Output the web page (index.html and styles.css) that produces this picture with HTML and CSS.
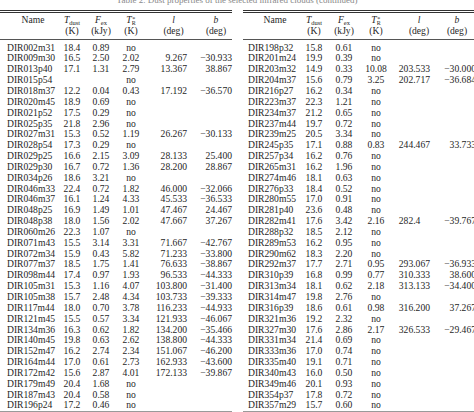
FILE: index.html
```html
<!DOCTYPE html>
<html>
<head>
<meta charset="utf-8">
<link rel="stylesheet" href="styles.css">
</head>
<body>
<div class="caption">Table 2. Dust properties of the selected infrared clouds (continued)</div>
<div class="tables">
<table class="t left">
<colgroup><col class="w-name"><col class="w-t"><col class="w-f"><col class="w-r"><col class="w-l"><col class="w-b"></colgroup>
<thead>
<tr><th class="c-name">Name</th><th class="c-t"><i>T</i><sub>dust</sub></th><th class="c-f"><i>F</i><sub>ex</sub></th><th class="c-r"><i>T</i><span class="ss"><span>*</span><span>R</span></span></th><th class="c-l"><i>l</i></th><th class="c-b"><i>b</i></th></tr>
<tr><th class="c-name"></th><th class="c-t">(K)</th><th class="c-f">(kJy)</th><th class="c-r">(K)</th><th class="c-l">(deg)</th><th class="c-b">(deg)</th></tr>
</thead>
<tbody>
<tr><td class="c-name">DIR002m31</td><td class="c-t">18.4</td><td class="c-f">0.89</td><td class="c-r">no</td><td class="c-l"></td><td class="c-b"></td></tr>
<tr><td class="c-name">DIR009m30</td><td class="c-t">16.5</td><td class="c-f">2.50</td><td class="c-r">2.02</td><td class="c-l">9.267</td><td class="c-b">−30.933</td></tr>
<tr><td class="c-name">DIR013p40</td><td class="c-t">17.1</td><td class="c-f">1.31</td><td class="c-r">2.79</td><td class="c-l">13.367</td><td class="c-b">38.867</td></tr>
<tr><td class="c-name">DIR015p54</td><td class="c-t"></td><td class="c-f"></td><td class="c-r">no</td><td class="c-l"></td><td class="c-b"></td></tr>
<tr><td class="c-name">DIR018m37</td><td class="c-t">12.2</td><td class="c-f">0.04</td><td class="c-r">0.43</td><td class="c-l">17.192</td><td class="c-b">−36.570</td></tr>
<tr><td class="c-name">DIR020m45</td><td class="c-t">18.9</td><td class="c-f">0.69</td><td class="c-r">no</td><td class="c-l"></td><td class="c-b"></td></tr>
<tr><td class="c-name">DIR021p52</td><td class="c-t">17.5</td><td class="c-f">0.29</td><td class="c-r">no</td><td class="c-l"></td><td class="c-b"></td></tr>
<tr><td class="c-name">DIR025p35</td><td class="c-t">21.8</td><td class="c-f">2.96</td><td class="c-r">no</td><td class="c-l"></td><td class="c-b"></td></tr>
<tr><td class="c-name">DIR027m31</td><td class="c-t">15.3</td><td class="c-f">0.52</td><td class="c-r">1.19</td><td class="c-l">26.267</td><td class="c-b">−30.133</td></tr>
<tr><td class="c-name">DIR028p54</td><td class="c-t">17.3</td><td class="c-f">0.29</td><td class="c-r">no</td><td class="c-l"></td><td class="c-b"></td></tr>
<tr><td class="c-name">DIR029p25</td><td class="c-t">16.6</td><td class="c-f">2.15</td><td class="c-r">3.09</td><td class="c-l">28.133</td><td class="c-b">25.400</td></tr>
<tr><td class="c-name">DIR029p30</td><td class="c-t">16.7</td><td class="c-f">0.72</td><td class="c-r">1.36</td><td class="c-l">28.200</td><td class="c-b">28.867</td></tr>
<tr><td class="c-name">DIR034p26</td><td class="c-t">18.6</td><td class="c-f">3.21</td><td class="c-r">no</td><td class="c-l"></td><td class="c-b"></td></tr>
<tr><td class="c-name">DIR046m33</td><td class="c-t">22.4</td><td class="c-f">0.72</td><td class="c-r">1.82</td><td class="c-l">46.000</td><td class="c-b">−32.066</td></tr>
<tr><td class="c-name">DIR046m37</td><td class="c-t">16.1</td><td class="c-f">1.24</td><td class="c-r">4.33</td><td class="c-l">45.533</td><td class="c-b">−36.533</td></tr>
<tr><td class="c-name">DIR048p25</td><td class="c-t">16.9</td><td class="c-f">1.49</td><td class="c-r">1.01</td><td class="c-l">47.467</td><td class="c-b">24.467</td></tr>
<tr><td class="c-name">DIR048p38</td><td class="c-t">18.0</td><td class="c-f">1.56</td><td class="c-r">2.02</td><td class="c-l">47.667</td><td class="c-b">37.267</td></tr>
<tr><td class="c-name">DIR060m26</td><td class="c-t">22.3</td><td class="c-f">1.07</td><td class="c-r">no</td><td class="c-l"></td><td class="c-b"></td></tr>
<tr><td class="c-name">DIR071m43</td><td class="c-t">15.5</td><td class="c-f">3.14</td><td class="c-r">3.31</td><td class="c-l">71.667</td><td class="c-b">−42.767</td></tr>
<tr><td class="c-name">DIR072m34</td><td class="c-t">15.9</td><td class="c-f">0.43</td><td class="c-r">5.82</td><td class="c-l">71.233</td><td class="c-b">−33.800</td></tr>
<tr><td class="c-name">DIR077m37</td><td class="c-t">18.5</td><td class="c-f">1.75</td><td class="c-r">1.41</td><td class="c-l">76.633</td><td class="c-b">−38.867</td></tr>
<tr><td class="c-name">DIR098m44</td><td class="c-t">17.4</td><td class="c-f">0.97</td><td class="c-r">1.93</td><td class="c-l">96.533</td><td class="c-b">−44.333</td></tr>
<tr><td class="c-name">DIR105m31</td><td class="c-t">15.3</td><td class="c-f">1.16</td><td class="c-r">4.07</td><td class="c-l">103.800</td><td class="c-b">−31.400</td></tr>
<tr><td class="c-name">DIR105m38</td><td class="c-t">15.7</td><td class="c-f">2.48</td><td class="c-r">4.34</td><td class="c-l">103.733</td><td class="c-b">−39.333</td></tr>
<tr><td class="c-name">DIR117m44</td><td class="c-t">18.0</td><td class="c-f">0.70</td><td class="c-r">3.78</td><td class="c-l">116.233</td><td class="c-b">−44.933</td></tr>
<tr><td class="c-name">DIR121m45</td><td class="c-t">15.5</td><td class="c-f">0.57</td><td class="c-r">3.34</td><td class="c-l">121.933</td><td class="c-b">−46.067</td></tr>
<tr><td class="c-name">DIR134m36</td><td class="c-t">16.3</td><td class="c-f">0.62</td><td class="c-r">1.82</td><td class="c-l">134.200</td><td class="c-b">−35.466</td></tr>
<tr><td class="c-name">DIR140m45</td><td class="c-t">19.8</td><td class="c-f">0.63</td><td class="c-r">2.62</td><td class="c-l">138.800</td><td class="c-b">−44.333</td></tr>
<tr><td class="c-name">DIR152m47</td><td class="c-t">16.2</td><td class="c-f">2.74</td><td class="c-r">2.34</td><td class="c-l">151.067</td><td class="c-b">−46.200</td></tr>
<tr><td class="c-name">DIR164m44</td><td class="c-t">17.0</td><td class="c-f">0.61</td><td class="c-r">2.73</td><td class="c-l">162.933</td><td class="c-b">−43.600</td></tr>
<tr><td class="c-name">DIR172m42</td><td class="c-t">15.6</td><td class="c-f">2.87</td><td class="c-r">4.01</td><td class="c-l">172.133</td><td class="c-b">−39.867</td></tr>
<tr><td class="c-name">DIR179m49</td><td class="c-t">20.4</td><td class="c-f">1.68</td><td class="c-r">no</td><td class="c-l"></td><td class="c-b"></td></tr>
<tr><td class="c-name">DIR187m43</td><td class="c-t">20.4</td><td class="c-f">0.58</td><td class="c-r">no</td><td class="c-l"></td><td class="c-b"></td></tr>
<tr><td class="c-name">DIR196p24</td><td class="c-t">17.2</td><td class="c-f">0.46</td><td class="c-r">no</td><td class="c-l"></td><td class="c-b"></td></tr>
</tbody>
</table>
<table class="t right">
<colgroup><col class="w-name"><col class="w-t"><col class="w-f"><col class="w-r"><col class="w-l"><col class="w-b"></colgroup>
<thead>
<tr><th class="c-name">Name</th><th class="c-t"><i>T</i><sub>dust</sub></th><th class="c-f"><i>F</i><sub>ex</sub></th><th class="c-r"><i>T</i><span class="ss"><span>*</span><span>R</span></span></th><th class="c-l"><i>l</i></th><th class="c-b"><i>b</i></th></tr>
<tr><th class="c-name"></th><th class="c-t">(K)</th><th class="c-f">(kJy)</th><th class="c-r">(K)</th><th class="c-l">(deg)</th><th class="c-b">(deg)</th></tr>
</thead>
<tbody>
<tr><td class="c-name">DIR198p32</td><td class="c-t">15.8</td><td class="c-f">0.61</td><td class="c-r">no</td><td class="c-l"></td><td class="c-b"></td></tr>
<tr><td class="c-name">DIR201m24</td><td class="c-t">19.9</td><td class="c-f">0.39</td><td class="c-r">no</td><td class="c-l"></td><td class="c-b"></td></tr>
<tr><td class="c-name">DIR203m32</td><td class="c-t">14.9</td><td class="c-f">0.33</td><td class="c-r">10.08</td><td class="c-l">203.533</td><td class="c-b">−30.000</td></tr>
<tr><td class="c-name">DIR204m37</td><td class="c-t">15.6</td><td class="c-f">0.79</td><td class="c-r">3.25</td><td class="c-l">202.717</td><td class="c-b">−36.684</td></tr>
<tr><td class="c-name">DIR216p27</td><td class="c-t">16.2</td><td class="c-f">0.34</td><td class="c-r">no</td><td class="c-l"></td><td class="c-b"></td></tr>
<tr><td class="c-name">DIR223m37</td><td class="c-t">22.3</td><td class="c-f">1.21</td><td class="c-r">no</td><td class="c-l"></td><td class="c-b"></td></tr>
<tr><td class="c-name">DIR234m37</td><td class="c-t">21.2</td><td class="c-f">0.65</td><td class="c-r">no</td><td class="c-l"></td><td class="c-b"></td></tr>
<tr><td class="c-name">DIR237m44</td><td class="c-t">19.7</td><td class="c-f">0.72</td><td class="c-r">no</td><td class="c-l"></td><td class="c-b"></td></tr>
<tr><td class="c-name">DIR239m25</td><td class="c-t">20.5</td><td class="c-f">3.34</td><td class="c-r">no</td><td class="c-l"></td><td class="c-b"></td></tr>
<tr><td class="c-name">DIR245p35</td><td class="c-t">17.1</td><td class="c-f">0.88</td><td class="c-r">0.83</td><td class="c-l">244.467</td><td class="c-b">33.733</td></tr>
<tr><td class="c-name">DIR257p34</td><td class="c-t">16.2</td><td class="c-f">0.76</td><td class="c-r">no</td><td class="c-l"></td><td class="c-b"></td></tr>
<tr><td class="c-name">DIR265m31</td><td class="c-t">16.2</td><td class="c-f">1.96</td><td class="c-r">no</td><td class="c-l"></td><td class="c-b"></td></tr>
<tr><td class="c-name">DIR274m46</td><td class="c-t">18.1</td><td class="c-f">0.63</td><td class="c-r">no</td><td class="c-l"></td><td class="c-b"></td></tr>
<tr><td class="c-name">DIR276p33</td><td class="c-t">18.4</td><td class="c-f">0.52</td><td class="c-r">no</td><td class="c-l"></td><td class="c-b"></td></tr>
<tr><td class="c-name">DIR280m55</td><td class="c-t">17.0</td><td class="c-f">0.91</td><td class="c-r">no</td><td class="c-l"></td><td class="c-b"></td></tr>
<tr><td class="c-name">DIR281p40</td><td class="c-t">23.6</td><td class="c-f">0.48</td><td class="c-r">no</td><td class="c-l"></td><td class="c-b"></td></tr>
<tr><td class="c-name">DIR282m41</td><td class="c-t">17.6</td><td class="c-f">3.42</td><td class="c-r">2.16</td><td class="c-l dec1">282.4</td><td class="c-b">−39.767</td></tr>
<tr><td class="c-name">DIR288p32</td><td class="c-t">18.5</td><td class="c-f">2.12</td><td class="c-r">no</td><td class="c-l"></td><td class="c-b"></td></tr>
<tr><td class="c-name">DIR289m53</td><td class="c-t">16.2</td><td class="c-f">0.95</td><td class="c-r">no</td><td class="c-l"></td><td class="c-b"></td></tr>
<tr><td class="c-name">DIR290m62</td><td class="c-t">18.3</td><td class="c-f">2.20</td><td class="c-r">no</td><td class="c-l"></td><td class="c-b"></td></tr>
<tr><td class="c-name">DIR292m37</td><td class="c-t">17.7</td><td class="c-f">2.71</td><td class="c-r">0.95</td><td class="c-l">293.067</td><td class="c-b">−36.933</td></tr>
<tr><td class="c-name">DIR310p39</td><td class="c-t">16.8</td><td class="c-f">0.99</td><td class="c-r">0.77</td><td class="c-l">310.333</td><td class="c-b">38.600</td></tr>
<tr><td class="c-name">DIR313m34</td><td class="c-t">18.1</td><td class="c-f">0.62</td><td class="c-r">2.18</td><td class="c-l">313.133</td><td class="c-b">−34.400</td></tr>
<tr><td class="c-name">DIR314m47</td><td class="c-t">19.8</td><td class="c-f">2.76</td><td class="c-r">no</td><td class="c-l"></td><td class="c-b"></td></tr>
<tr><td class="c-name">DIR316p39</td><td class="c-t">18.6</td><td class="c-f">0.61</td><td class="c-r">0.98</td><td class="c-l">316.200</td><td class="c-b">37.267</td></tr>
<tr><td class="c-name">DIR321m36</td><td class="c-t">19.2</td><td class="c-f">2.32</td><td class="c-r">no</td><td class="c-l"></td><td class="c-b"></td></tr>
<tr><td class="c-name">DIR327m30</td><td class="c-t">17.6</td><td class="c-f">2.86</td><td class="c-r">2.17</td><td class="c-l">326.533</td><td class="c-b">−29.467</td></tr>
<tr><td class="c-name">DIR331m34</td><td class="c-t">21.4</td><td class="c-f">0.69</td><td class="c-r">no</td><td class="c-l"></td><td class="c-b"></td></tr>
<tr><td class="c-name">DIR333m36</td><td class="c-t">17.0</td><td class="c-f">0.74</td><td class="c-r">no</td><td class="c-l"></td><td class="c-b"></td></tr>
<tr><td class="c-name">DIR335m40</td><td class="c-t">19.1</td><td class="c-f">0.71</td><td class="c-r">no</td><td class="c-l"></td><td class="c-b"></td></tr>
<tr><td class="c-name">DIR340m43</td><td class="c-t">16.0</td><td class="c-f">0.50</td><td class="c-r">no</td><td class="c-l"></td><td class="c-b"></td></tr>
<tr><td class="c-name">DIR349m46</td><td class="c-t">20.1</td><td class="c-f">0.93</td><td class="c-r">no</td><td class="c-l"></td><td class="c-b"></td></tr>
<tr><td class="c-name">DIR354p37</td><td class="c-t">17.8</td><td class="c-f">0.72</td><td class="c-r">no</td><td class="c-l"></td><td class="c-b"></td></tr>
<tr><td class="c-name">DIR357m29</td><td class="c-t">15.7</td><td class="c-f">0.60</td><td class="c-r">no</td><td class="c-l"></td><td class="c-b"></td></tr>
</tbody>
</table>
</div>
</body>
</html>
```

FILE: styles.css
```css
html, body {
  margin: 0;
  padding: 0;
  overflow: hidden;
  background: #fff;
}
body {
  width: 474px;
  height: 412px;
  font-family: "Liberation Serif", "Times New Roman", serif;
  font-size: 9.6px;
  color: #262626;
}
.caption {
  height: 10px;
  margin-top: -5px;
  margin-bottom: 5px;
  font-size: 9px;
  line-height: 10px;
  text-align: center;
  color: #888;
  white-space: nowrap;
}
.tables {
  display: flex;
  gap: 11px;
  align-items: flex-start;
}
table.t {
  flex: none;
  table-layout: fixed;
  border-collapse: separate;
  border-spacing: 0;
  border-top: 3px double #333;
  border-bottom: 3px solid #9a9a9a;
}
table.left { width: 232px; }
table.right { width: 233px; }

.left .w-name { width: 60px; }
.left .w-t { width: 24px; }
.left .w-f { width: 34px; }
.left .w-r { width: 26px; }
.left .w-l { width: 48px; }
.left .w-b { width: 40px; }

.right .w-name { width: 60px; }
.right .w-t { width: 22px; }
.right .w-f { width: 38px; }
.right .w-r { width: 26px; }
.right .w-l { width: 43px; }
.right .w-b { width: 44px; }

th, td {
  padding: 0;
  white-space: nowrap;
  font-weight: normal;
}
thead th {
  line-height: 10px;
  text-align: center;
}
thead tr:first-child th { padding-top: 1.5px; }
thead tr:last-child th {
  padding-bottom: 3.5px;
  border-bottom: 1px solid #555;
}
tbody td { line-height: 10.85px; }
tbody tr:first-child td { padding-top: 2.6px; }
i { font-style: italic; }
sub {
  font-size: 6.5px;
  line-height: 0;
  vertical-align: -2px;
}
.ss {
  display: inline-flex;
  flex-direction: column;
  font-size: 6px;
  line-height: 4.5px;
  vertical-align: 2px;
}
.c-t, .c-f, .c-r { text-align: center; }
tbody .c-l, tbody .c-b { text-align: right; }

.left thead .c-name { padding-left: 6px; }
.left tbody .c-name { padding-left: 7px; text-align: left; }
.left tbody .c-l { padding-right: 5px; }
.left thead .c-l { padding-left: 16px; padding-right: 5px; }
.left thead .c-b { padding-left: 8px; }

.right thead .c-name { padding-left: 4px; }
.right tbody .c-name { padding-left: 5px; text-align: left; }
.right tbody .c-l { padding-right: 2px; }
.right tbody .c-l.dec1 { padding-right: 11.6px; }
.right thead .c-l { padding-left: 19px; padding-right: 2px; }
.right thead .c-b { padding-left: 6px; }
```
